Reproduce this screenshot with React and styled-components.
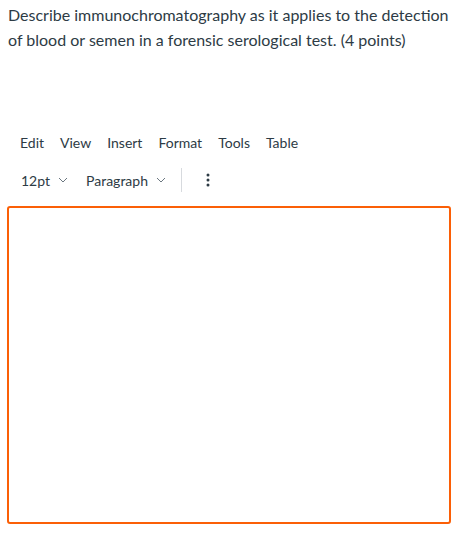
import React from "react";
import styled, { createGlobalStyle } from "styled-components";

const GlobalStyle = createGlobalStyle`
  html, body {
    margin: 0;
    padding: 0;
    background: #fff;
  }
  body {
    font-family: Lato, "Liberation Sans", sans-serif;
    color: #2d3b45;
  }
`;

const menuItems = ["Edit", "View", "Insert", "Format", "Tools", "Table"];

function Chevron() {
  return (
    <svg width="10" height="6" viewBox="0 0 10 6" fill="none">
      <path d="M1 1l4 4 4-4" stroke="#6b7780" strokeWidth="1" />
    </svg>
  );
}

function MoreIcon() {
  return (
    <svg width="4" height="14" viewBox="0 0 4 14" fill="#2d3b45">
      <circle cx="2" cy="2" r="1.5" />
      <circle cx="2" cy="7" r="1.5" />
      <circle cx="2" cy="12" r="1.5" />
    </svg>
  );
}

export default function App() {
  return (
    <Page>
      <GlobalStyle />
      <Question>
        Describe immunochromatography as it applies to the detection of blood
        or semen in a forensic serological test. (4 points)
      </Question>
      <Editor>
        <MenuBar>
          {menuItems.map(item => (
            <MenuItem key={item}>{item}</MenuItem>
          ))}
        </MenuBar>
        <ToolBar>
          <Select>
            12pt <Chevron />
          </Select>
          <Select>
            Paragraph <Chevron />
          </Select>
          <Divider />
          <IconButton>
            <MoreIcon />
          </IconButton>
        </ToolBar>
        <TextArea />
      </Editor>
    </Page>
  );
}

const Page = styled.div`
  padding: 2px 8px 0 8px;
  width: 463px;
  box-sizing: border-box;
`;

const Question = styled.p`
  margin: 0;
  font-size: 16px;
  line-height: 25px;
  color: #2d3b45;
`;

const Editor = styled.div`
  margin-top: 78px;
`;

const MenuBar = styled.div`
  display: flex;
  align-items: center;
  height: 26px;
  padding-left: 4px;
`;

const MenuItem = styled.div`
  font-size: 14px;
  padding: 0 8px;
  color: #2d3b45;
  line-height: 26px;
`;

const ToolBar = styled.div`
  display: flex;
  align-items: center;
  height: 34px;
  margin-top: 7px;
  padding-left: 5px;
`;

const Select = styled.div`
  display: flex;
  align-items: center;
  gap: 6px;
  font-size: 14px;
  padding: 0 10px 0 8px;
  color: #2d3b45;
  svg {
    margin-left: 2px;
  }
`;

const Divider = styled.div`
  width: 1px;
  height: 24px;
  background: #d7dade;
  margin: 0 8px 0 5px;
`;

const IconButton = styled.div`
  display: flex;
  align-items: center;
  justify-content: center;
  width: 36px;
  height: 34px;
`;

const TextArea = styled.div`
  margin-top: 9px;
  width: 444px;
  height: 318px;
  box-sizing: border-box;
  margin-left: -1px;
  border: 2px solid #fb5f06;
  border-radius: 3px;
`;
